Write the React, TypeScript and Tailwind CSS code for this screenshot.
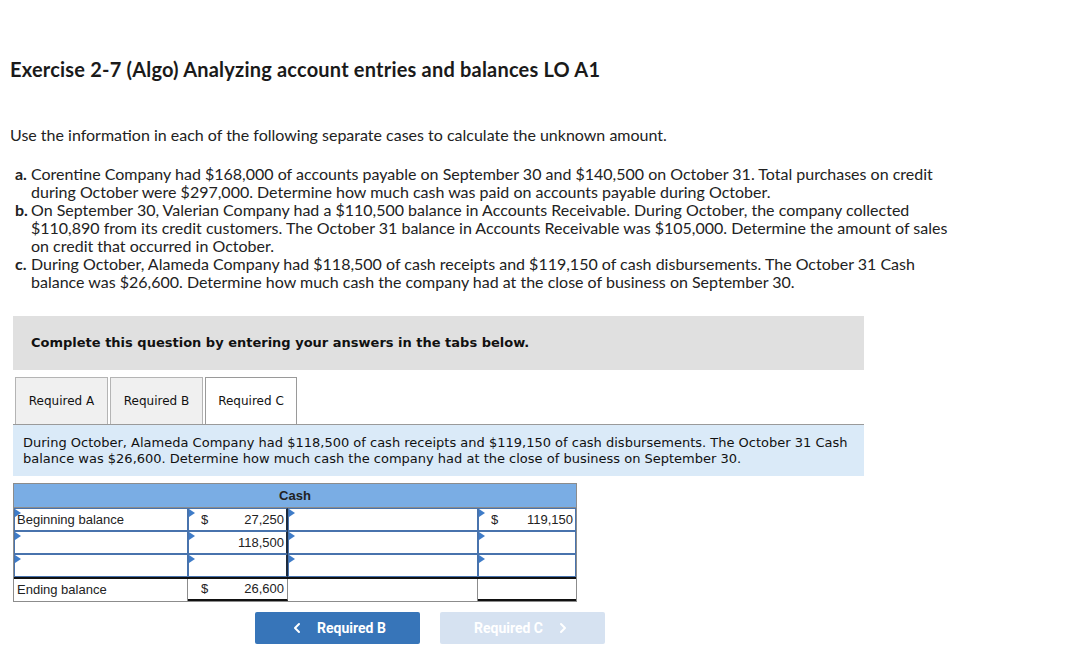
import { ChevronLeft, ChevronRight } from "lucide-react";

const body = "font-['Lato','Open_Sans',sans-serif]";
const verdana = "font-['DejaVu_Sans','Verdana',sans-serif]";
const arial = "font-['Liberation_Sans','Arial',sans-serif]";

function Flag() {
  return (
    <span className="absolute left-0 top-0 h-0 w-0 border-t-[4px] border-b-[4px] border-l-[6px] border-t-transparent border-b-transparent border-l-[#3f7cc8]" />
  );
}

type Cell = {
  text?: string;
  dollar?: boolean;
  input?: boolean;
  cls?: string;
};

const rows: Cell[][] = [
  [
    { text: "Beginning balance", input: true },
    { text: "27,250", dollar: true, input: true, cls: "border-r-2 border-r-[#1d2b3e]" },
    { input: true },
    { text: "119,150", dollar: true, input: true },
  ],
  [
    { input: true },
    { text: "118,500", input: true, cls: "border-r-2 border-r-[#1d2b3e]" },
    { input: true },
    { input: true },
  ],
  [
    { input: true },
    { input: true, cls: "border-r-2 border-r-[#1d2b3e]" },
    { input: true },
    { input: true },
  ],
];

function NumCell({ c, right }: { c: Cell; right?: boolean }) {
  if (!right) {
    return <span className="pl-[2px]">{c.text}</span>;
  }
  return (
    <div className="flex w-full justify-between pl-[12px] pr-[2px]">
      <span>{c.dollar ? "$" : ""}</span>
      <span>{c.text}</span>
    </div>
  );
}

function CashTable() {
  return (
    <div className={`w-[564px] border border-[#8c8c8c] text-[13px] text-[#222] ${arial}`}>
      <div className="flex h-[24px] items-center justify-center border-b border-[#8c8c8c] bg-[#7aade4] font-bold">
        Cash
      </div>
      {rows.map((r, i) => (
        <div key={i} className="grid grid-cols-[174px_100px_190px_98px]">
          {r.map((c, j) => (
            <div
              key={j}
              className={`relative flex h-[23px] items-center border border-[#4873ad] bg-white ${c.cls ?? ""}`}
            >
              {c.input && <Flag />}
              <NumCell c={c} right={j === 1 || j === 3} />
            </div>
          ))}
        </div>
      ))}
      <div className="grid grid-cols-[174px_100px_190px_98px] border-t-2 border-t-[#111]">
        <div className="flex h-[22px] items-center border-r border-[#8c8c8c] pl-[3px]">Ending balance</div>
        <div className="flex h-[22px] items-center justify-between border-b-2 border-r border-b-[#111] border-r-[#8c8c8c] pl-[13px] pr-[3px]">
          <span>$</span>
          <span>26,600</span>
        </div>
        <div className="h-[22px] border-r border-[#8c8c8c]" />
        <div className="h-[22px] border-b-2 border-[#111]" />
      </div>
    </div>
  );
}

export default function App() {
  return (
    <div className={`min-h-[667px] w-[1088px] bg-white text-[#222] ${body}`}>
      <div className="px-[10px] pt-[56px]">
        <h1 className="text-[20px] font-bold leading-[26px] tracking-[0.2px] text-[#1a1a1a]">
          Exercise 2-7 (Algo) Analyzing account entries and balances LO A1
        </h1>
        <p className="mt-[44px] text-[16px] leading-[18px]">
          Use the information in each of the following separate cases to calculate the unknown amount.
        </p>
        <ol className="mt-[21px] w-[950px] pl-[5px] text-[16px] leading-[18px]">
          <li className="flex">
            <span className="w-[16px] shrink-0 font-bold">a.</span>
            <span>
              Corentine Company had $168,000 of accounts payable on September 30 and $140,500 on October 31. Total purchases on credit during October were $297,000. Determine how much cash was paid on accounts payable during October.
            </span>
          </li>
          <li className="flex">
            <span className="w-[16px] shrink-0 font-bold">b.</span>
            <span>
              On September 30, Valerian Company had a $110,500 balance in Accounts Receivable. During October, the company collected $110,890 from its credit customers. The October 31 balance in Accounts Receivable was $105,000. Determine the amount of sales on credit that occurred in October.
            </span>
          </li>
          <li className="flex">
            <span className="w-[16px] shrink-0 font-bold">c.</span>
            <span>
              During October, Alameda Company had $118,500 of cash receipts and $119,150 of cash disbursements. The October 31 Cash balance was $26,600. Determine how much cash the company had at the close of business on September 30.
            </span>
          </li>
        </ol>
      </div>

      <div className="ml-[13px] mt-[25px] w-[851px]">
        <div className={`flex h-[54px] items-center bg-[#e0e0e0] pl-[18px] text-[13px] font-bold text-[#111] ${verdana}`}>
          Complete this question by entering your answers in the tabs below.
        </div>

        <div className={`mt-[7px] flex h-[47px] items-end gap-[2px] pl-[2px] text-[12px] text-[#111] ${verdana}`}>
          <div className="flex h-[47px] w-[93px] items-center justify-center border border-b-0 border-[#b4b4b4] bg-[#f0f0f0]">
            Required A
          </div>
          <div className="flex h-[47px] w-[93px] items-center justify-center border border-b-0 border-[#b4b4b4] bg-[#f0f0f0]">
            Required B
          </div>
          <div className="flex h-[47px] w-[92px] items-center justify-center border border-b-0 border-[#9a9a9a] bg-white">
            Required C
          </div>
        </div>

        <div className={`border-t border-[#9a9a9a] bg-[#daeaf8] px-[10px] pb-[9px] pt-[10px] text-[13px] leading-[16px] text-[#111] ${verdana}`}>
          During October, Alameda Company had $118,500 of cash receipts and $119,150 of cash disbursements. The October 31 Cash balance was $26,600. Determine how much cash the company had at the close of business on September 30.
        </div>

        <div className="mt-[7px]">
          <CashTable />
        </div>

        <div className="ml-[242px] mt-[10px] flex gap-[20px] font-['Roboto',sans-serif] text-[14px] font-bold">
          <button className="flex h-[32px] w-[165px] items-center justify-center gap-[12px] rounded-[2px] bg-[#3775b9] text-white">
            <ChevronLeft size={16} strokeWidth={3} />
            Required B
          </button>
          <button className="flex h-[32px] w-[165px] items-center justify-center gap-[12px] rounded-[2px] bg-[#d6e2f1] text-white">
            Required C
            <ChevronRight size={16} strokeWidth={3} />
          </button>
        </div>
      </div>
    </div>
  );
}
